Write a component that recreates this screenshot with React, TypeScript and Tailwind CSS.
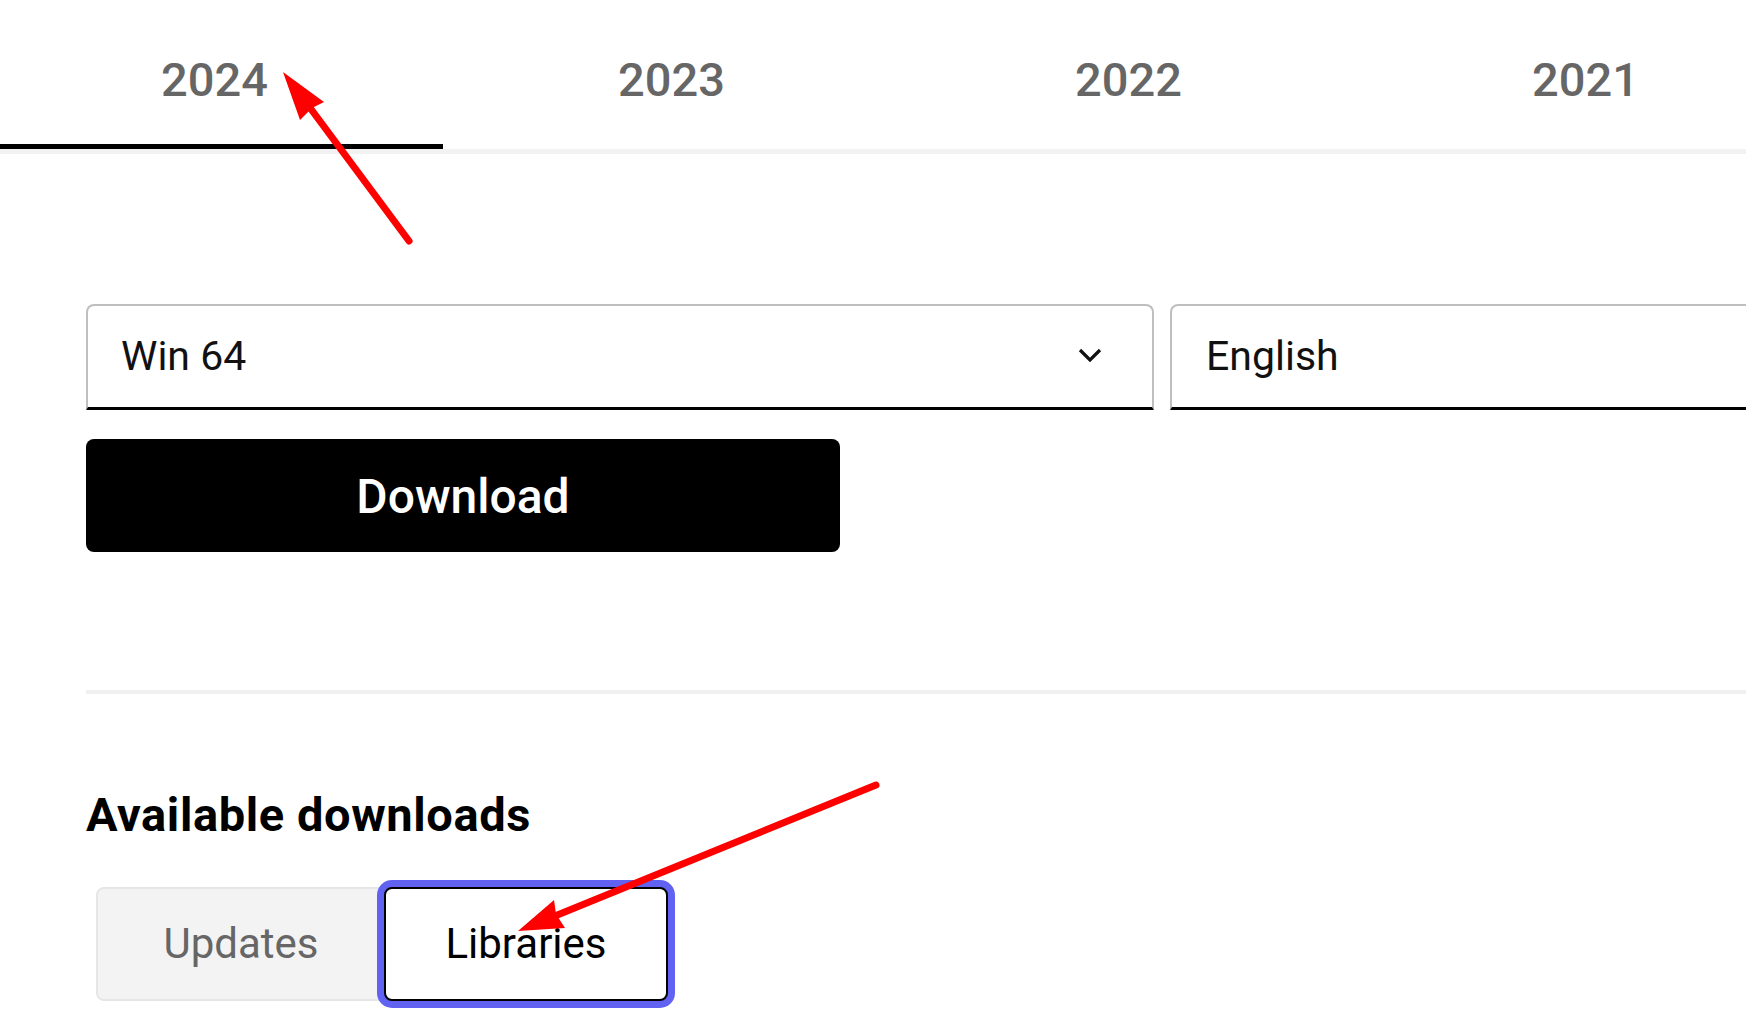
import React from 'react';

const years = ['2024', '2023', '2022', '2021'];

// red annotation arrows drawn over the page
function Arrows() {
    return (
        <svg
            className="absolute inset-0 pointer-events-none"
            width="1746"
            height="1035"
            viewBox="0 0 1746 1035"
        >
            <line x1="409" y1="241" x2="305" y2="101" stroke="#ff0000" strokeWidth="7" strokeLinecap="round" />
            <polygon points="283,72 324,102 312,108 300,120" fill="#ff0000" />
            <line x1="876" y1="785" x2="550" y2="918" stroke="#ff0000" strokeWidth="7" strokeLinecap="round" />
            <polygon points="518,931 554,900 556,914 565,928" fill="#ff0000" />
        </svg>
    );
}

export default function App() {
    const [year, setYear] = React.useState('2024');
    const [tab, setTab] = React.useState('Libraries');

    return (
        <div className="relative w-[1746px] h-[1035px] overflow-hidden bg-white font-['Roboto',sans-serif]">
            {/* Year tabs */}
            <div className="flex ml-[-14px] border-b-[5px] border-[#f2f2f2]">
                {years.map((y) => (
                    <button
                        key={y}
                        onClick={() => setYear(y)}
                        className={`w-[457px] h-[149px] shrink-0 flex items-center justify-center pt-[15px] border-b-[5px] text-[47px] leading-none font-medium text-[#666666] ${
                            year === y ? 'border-black' : 'border-transparent'
                        }`}
                    >
                        {y}
                    </button>
                ))}
            </div>

            <div className="pl-[86px] pt-[150px]">
                {/* Platform / language selects */}
                <div className="flex gap-[16px]">
                    <div className="w-[1068px] h-[106px] shrink-0 flex items-center justify-between pl-[33px] pr-[50px] border-2 border-b-[3px] border-[#bfbfbf] border-b-black rounded-t-lg">
                        <span className="text-[41px] leading-none text-[#111]">Win 64</span>
                        <svg width="24" height="14" viewBox="0 0 24 14" className="mb-1">
                            <polyline points="2,2 12,12 22,2" fill="none" stroke="#111" strokeWidth="3.2" />
                        </svg>
                    </div>
                    <div className="w-[700px] h-[106px] shrink-0 flex items-center pl-[34px] border-2 border-b-[3px] border-[#bfbfbf] border-b-black rounded-t-lg">
                        <span className="text-[41px] leading-none text-[#111]">English</span>
                    </div>
                </div>

                {/* Download */}
                <button className="mt-[29px] w-[754px] h-[113px] flex items-center justify-center pt-[3px] bg-black rounded-lg text-white text-[48px] leading-none font-medium">
                    Download
                </button>

                <div className="mt-[138px] h-[4px] bg-[#f0f0f0]"></div>

                <h2 className="mt-[97px] text-[47px] leading-none font-bold tracking-[0.6px] text-black">
                    Available downloads
                </h2>

                {/* Updates / Libraries switch */}
                <div className="mt-[49px] ml-[10px] flex">
                    <button
                        onClick={() => setTab('Updates')}
                        className="w-[290px] h-[114px] flex items-center justify-center bg-[#f3f3f3] border-2 border-[#e6e6e6] rounded-l-lg text-[42px] leading-none text-[#666666]"
                    >
                        Updates
                    </button>
                    <button
                        onClick={() => setTab('Libraries')}
                        className={`relative ml-[-2px] w-[284px] h-[114px] flex items-center justify-center rounded-lg text-[42px] leading-none ${
                            tab === 'Libraries'
                                ? 'bg-white border-2 border-black ring-[7px] ring-[#6262f2] text-black'
                                : 'bg-[#f3f3f3] text-[#666666]'
                        }`}
                    >
                        Libraries
                    </button>
                </div>
            </div>

            <Arrows />
        </div>
    );
}
